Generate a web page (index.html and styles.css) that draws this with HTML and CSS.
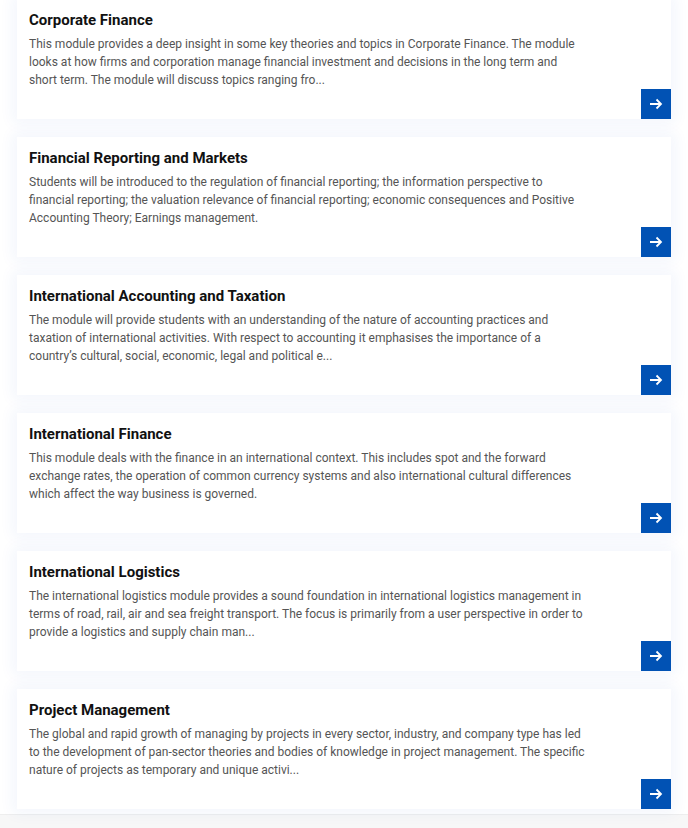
FILE: index.html
```html
<!DOCTYPE html>
<html lang="en">
<head>
<meta charset="utf-8">
<title>Modules</title>
<link rel="stylesheet" href="styles.css">
</head>
<body>
<main class="list">
  <article class="card">
    <h3 class="card-title">Corporate Finance</h3>
    <p class="card-desc">This module provides a deep insight in some key theories and topics in Corporate Finance. The module looks at how firms and corporation manage financial investment and decisions in the long term and short term. The module will discuss topics ranging fro...</p>
    <a class="card-btn" href="#" aria-label="Open"><svg width="14" height="12" viewBox="0 0 14 12"><path d="M1 6h11M7.5 1.5L12 6l-4.5 4.5" fill="none" stroke="#fff" stroke-width="1.8"/></svg></a>
  </article>
  <article class="card">
    <h3 class="card-title">Financial Reporting and Markets</h3>
    <p class="card-desc">Students will be introduced to the regulation of financial reporting; the information perspective to financial reporting; the valuation relevance of financial reporting; economic consequences and Positive Accounting Theory; Earnings management.</p>
    <a class="card-btn" href="#" aria-label="Open"><svg width="14" height="12" viewBox="0 0 14 12"><path d="M1 6h11M7.5 1.5L12 6l-4.5 4.5" fill="none" stroke="#fff" stroke-width="1.8"/></svg></a>
  </article>
  <article class="card">
    <h3 class="card-title">International Accounting and Taxation</h3>
    <p class="card-desc">The module will provide students with an understanding of the nature of accounting practices and taxation of international activities. With respect to accounting it emphasises the importance of a country’s cultural, social, economic, legal and political e...</p>
    <a class="card-btn" href="#" aria-label="Open"><svg width="14" height="12" viewBox="0 0 14 12"><path d="M1 6h11M7.5 1.5L12 6l-4.5 4.5" fill="none" stroke="#fff" stroke-width="1.8"/></svg></a>
  </article>
  <article class="card">
    <h3 class="card-title">International Finance</h3>
    <p class="card-desc">This module deals with the finance in an international context. This includes spot and the forward exchange rates, the operation of common currency systems and also international cultural differences which affect the way business is governed.</p>
    <a class="card-btn" href="#" aria-label="Open"><svg width="14" height="12" viewBox="0 0 14 12"><path d="M1 6h11M7.5 1.5L12 6l-4.5 4.5" fill="none" stroke="#fff" stroke-width="1.8"/></svg></a>
  </article>
  <article class="card">
    <h3 class="card-title">International Logistics</h3>
    <p class="card-desc">The international logistics module provides a sound foundation in international logistics management in terms of road, rail, air and sea freight transport. The focus is primarily from a user perspective in order to provide a logistics and supply chain man...</p>
    <a class="card-btn" href="#" aria-label="Open"><svg width="14" height="12" viewBox="0 0 14 12"><path d="M1 6h11M7.5 1.5L12 6l-4.5 4.5" fill="none" stroke="#fff" stroke-width="1.8"/></svg></a>
  </article>
  <article class="card">
    <h3 class="card-title">Project Management</h3>
    <p class="card-desc">The global and rapid growth of managing by projects in every sector, industry, and company type has led to the development of pan-sector theories and bodies of knowledge in project management. The specific nature of projects as temporary and unique activi...</p>
    <a class="card-btn" href="#" aria-label="Open"><svg width="14" height="12" viewBox="0 0 14 12"><path d="M1 6h11M7.5 1.5L12 6l-4.5 4.5" fill="none" stroke="#fff" stroke-width="1.8"/></svg></a>
  </article>
</main>
<footer class="footer"></footer>
</body>
</html>
```

FILE: styles.css
```css
html, body {
  margin: 0;
  padding: 0;
  background: #fff;
  font-family: Roboto, "Liberation Sans", Arial, sans-serif;
}
.list {
  display: flex;
  flex-direction: column;
  gap: 18px;
  padding: 0 17px;
  margin-top: -1px;
}
.card {
  position: relative;
  height: 120px;
  box-sizing: border-box;
  background: #fff;
  padding: 11px 12px 0 12px;
  box-shadow: 0 0 14px 4px rgba(30, 90, 200, 0.06);
}
.card-title {
  margin: 0;
  font-size: 15px;
  line-height: 20px;
  font-weight: 700;
  color: #111;
}
.card-desc {
  margin: 5px 0 0 0;
  max-width: 556px;
  font-size: 12px;
  line-height: 18px;
  color: #555;
}
.card-btn {
  position: absolute;
  right: 0;
  bottom: 0;
  width: 30px;
  height: 30px;
  background: #0152b4;
  display: flex;
  align-items: center;
  justify-content: center;
}
.card-btn svg { display: block; }
.footer {
  margin-top: 5px;
  height: 20px;
  background: #f7f7f7;
  border-top: 1px solid #eeeeee;
}
```
